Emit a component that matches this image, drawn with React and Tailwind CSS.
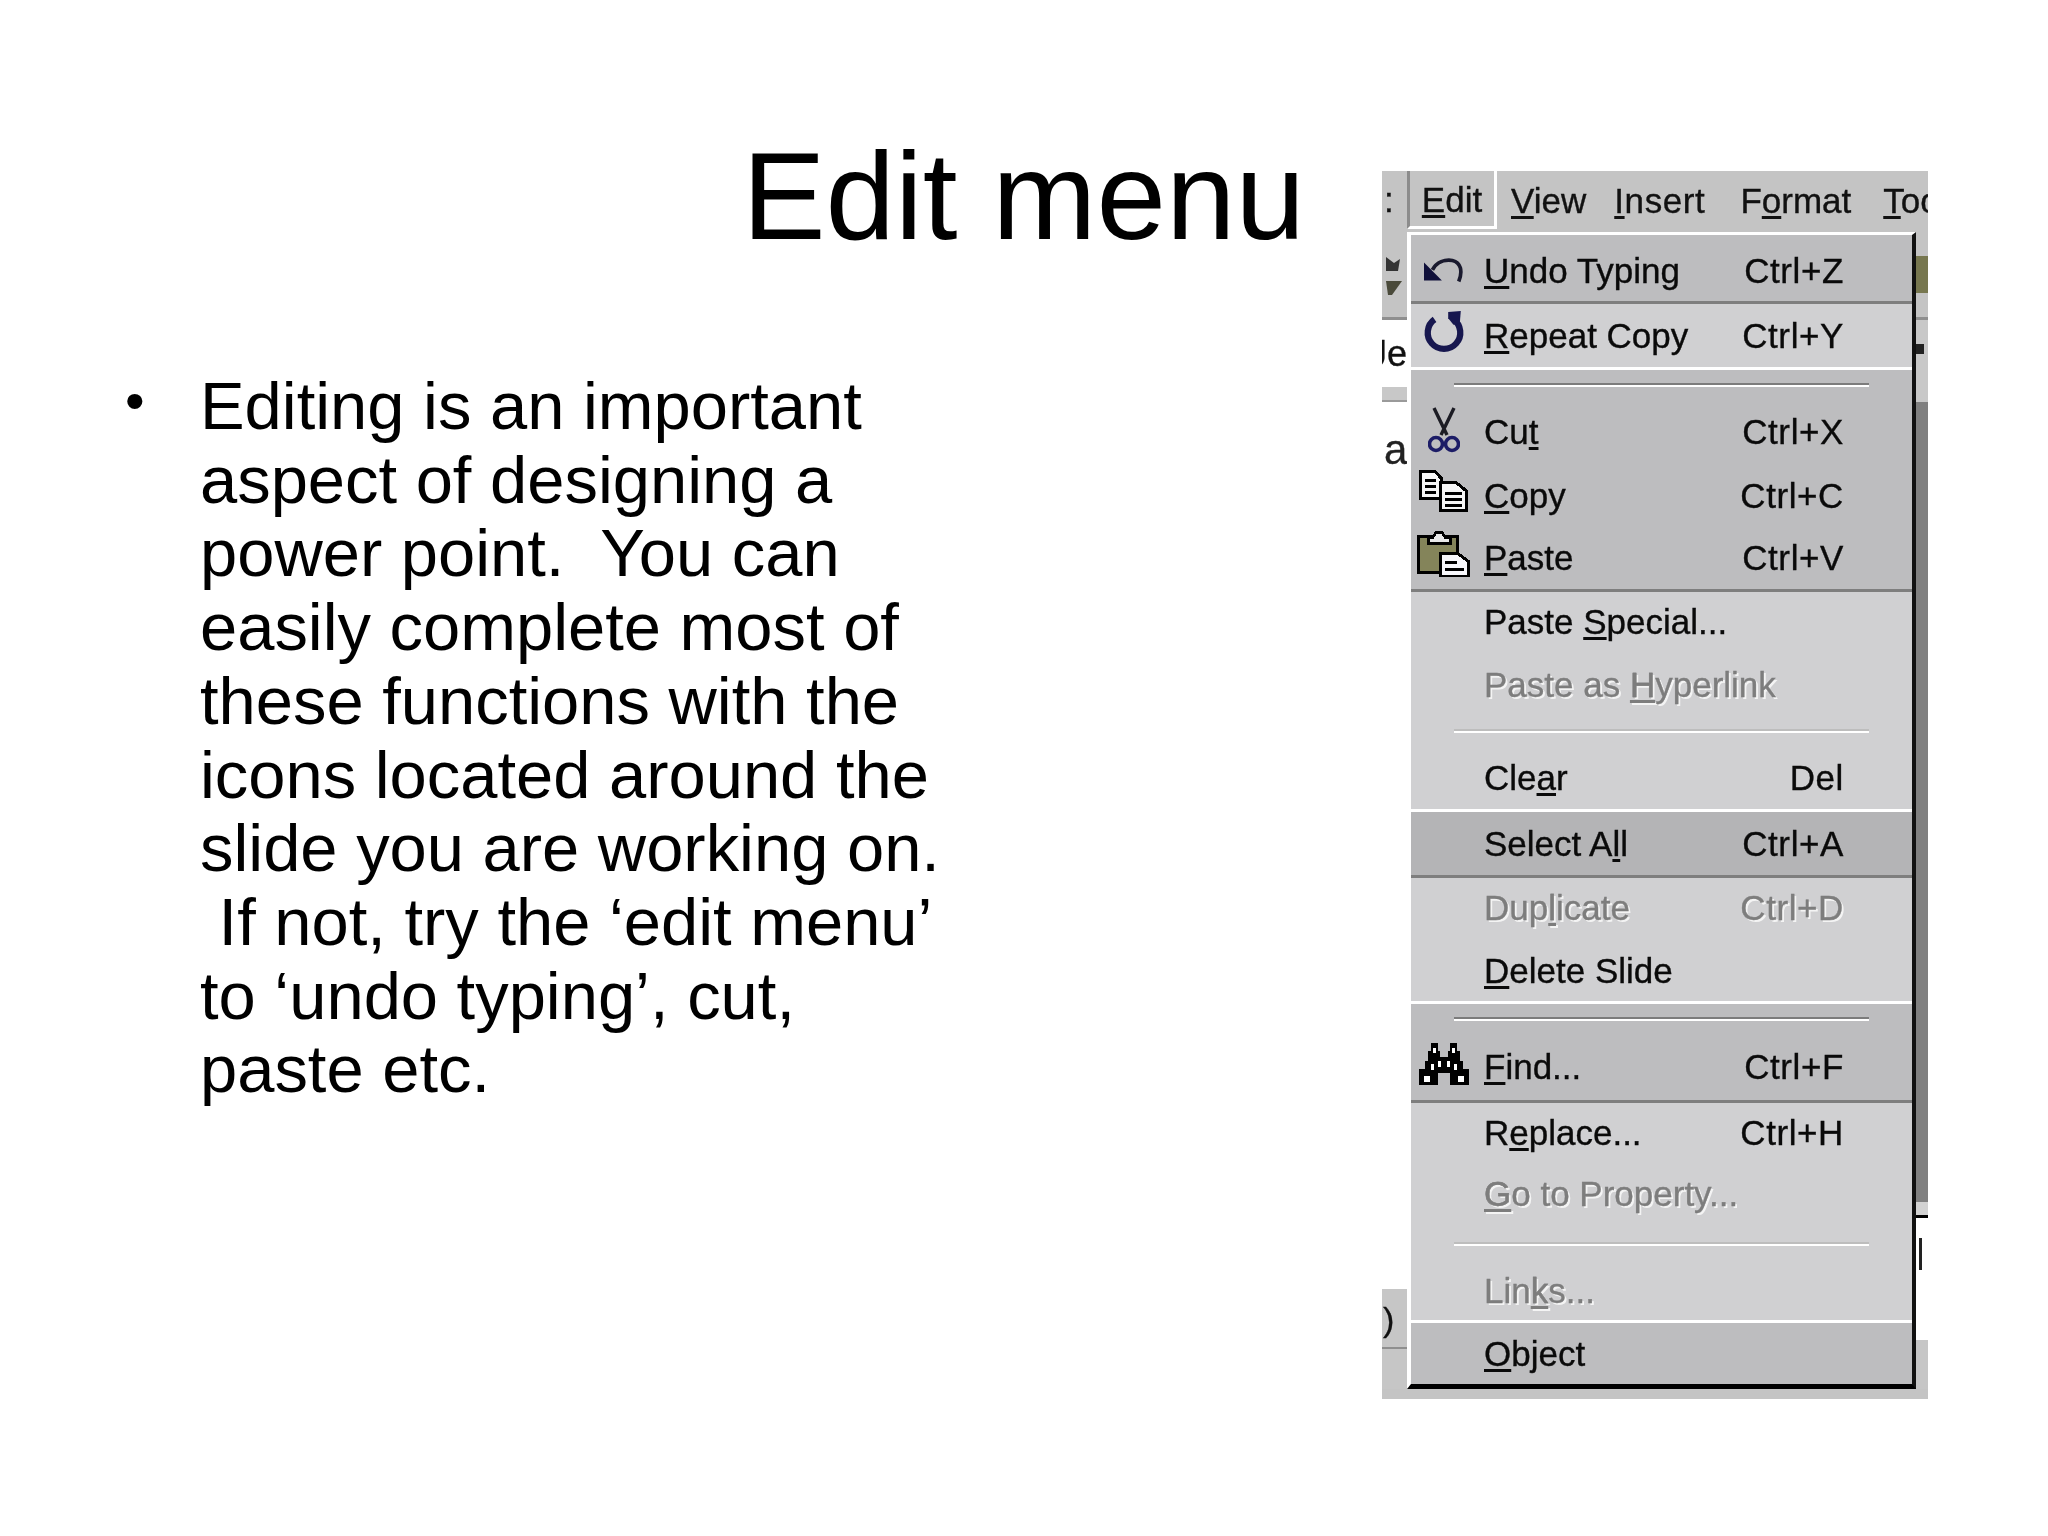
const sans = "font-['Liberation_Sans',Arial,sans-serif]";

function UndoIcon() {
  return (
    <svg width="40" height="26" viewBox="0 0 38 24" className="block">
      <path d="M0 4 L17 21 L0 21 Z" fill="#10103a" />
      <path d="M8 11 C12 3 20 1 27 2 C35 4 37 12 33 22" fill="none" stroke="#1a1a2e" strokeWidth="3.5" />
    </svg>
  );
}
function RepeatIcon() {
  return (
    <svg width="42" height="42" viewBox="0 0 40 40" className="-mt-[8px] block">
      <path d="M11 8 A15.5 15.5 0 1 0 29 8" fill="none" stroke="#17174f" strokeWidth="6" />
      <path d="M24 1 L36 0 L35 12 L29 13 L24 7 Z" fill="#17174f" />
    </svg>
  );
}
function CutIcon() {
  return (
    <svg width="32" height="48" viewBox="0 0 32 46" className="-mt-[2px] block">
      <path d="M6 0 L19 27 M26 0 L13 27" fill="none" stroke="#1c1c24" strokeWidth="3.4" />
      <circle cx="8" cy="36" r="6.5" fill="none" stroke="#1c1c66" strokeWidth="3.6" />
      <circle cx="24" cy="36" r="6.5" fill="none" stroke="#1c1c66" strokeWidth="3.6" />
    </svg>
  );
}
function CopyIcon() {
  return (
    <svg width="50" height="42" viewBox="0 0 50 42" className="-mt-[9px] block" shapeRendering="crispEdges">
      <path d="M1.5 1.5 H16 L22 8 V28 H1.5 Z" fill="#f7f7f7" stroke="#000" strokeWidth="3" />
      <path d="M6 10 H17 M6 16 H17 M6 22 H17" stroke="#000" strokeWidth="3" />
      <path d="M21.5 12.5 H37 L47.5 21 V40.5 H21.5 Z" fill="#f7f7f7" stroke="#000" strokeWidth="3" />
      <path d="M26 23 H43 M26 29 H43 M26 35 H43" stroke="#000" strokeWidth="3" />
    </svg>
  );
}
function PasteIcon() {
  return (
    <svg width="53" height="46" viewBox="0 0 53 46" className="-mt-[8px] block" shapeRendering="crispEdges">
      <rect x="1.5" y="5" width="39" height="36" fill="#84845a" stroke="#000" strokeWidth="3" />
      <path d="M11 12 V6 H16 L19 1.5 H25 L28 6 H33 V12 Z" fill="#e8e8e8" stroke="#000" strokeWidth="3" />
      <path d="M23.5 22 H40 L51 30 V45 H23.5 Z" fill="#f7f7fb" stroke="#000" strokeWidth="3" />
      <path d="M28 31 H40 M28 38 H47" stroke="#000" strokeWidth="3" />
    </svg>
  );
}
function FindIcon() {
  return (
    <svg width="50" height="42" viewBox="0 0 50 42" className="-mt-[6px] block" shapeRendering="crispEdges">
      <path d="M12 0 H19 V8 H21 V14 H29 V8 H31 V0 H38 V8 H41 V18 H44 V26 H50 V42 H31 V30 H19 V42 H0 V26 H6 V18 H9 V8 H12 Z" fill="#000" />
      <path d="M14 5 H17 V10 H14 Z M33 5 H36 V10 H33 Z M12 21 H15 V27 H12 Z M28 18 H31 V24 H28 Z M19 18 H22 V24 H19 Z M35 21 H38 V27 H35 Z M5 33 H11 V39 H5 Z M39 33 H45 V39 H39 Z" fill="#fff" />
    </svg>
  );
}

function Item({ h, icon, label, shortcut, off, nudge = "" }) {
  const tone = off ? "text-[#7d7d7d] [text-shadow:2px_2px_0_#f4f4f4]" : "text-[#0a0a0a]";
  return (
    <div className={`relative flex items-center ${h} ${nudge} pr-[68px] ${tone}`}>
      <div className="mr-[8px] flex w-[65px] shrink-0 justify-center">{icon}</div>
      <div className="whitespace-pre">{label}</div>
      <div className="ml-auto tracking-[0.6px]">{shortcut}</div>
    </div>
  );
}
const M = ({ children }) => <span className="underline decoration-[3px] underline-offset-[3px]">{children}</span>;

function Sep({ h, dark }) {
  return (
    <div className={`flex ${h} items-center pl-[43px] pr-[43px]`}>
      <div className={`w-full border-b-[2px] border-t-[2px] border-b-white ${dark ? "border-t-[#7c7c7c]" : "border-t-[#bdbdbd]"}`} />
    </div>
  );
}

function LeftStrip() {
  return (
    <div className="flex w-[25px] shrink-0 flex-col overflow-hidden">
      <div className="flex h-[88px] flex-col items-center justify-center border-b-[3px] border-[#8f8f8f] bg-[#c4c4c4]">
        <svg width="18" height="40" viewBox="0 0 18 40" className="block">
          <path d="M0 2 L8 8 L14 4 L12 16 L0 16 Z" fill="#333" />
          <path d="M0 26 H16 L6 40 H2 Z" fill="#4a4a3a" />
        </svg>
      </div>
      <div className="flex h-[67px] items-center justify-end bg-white text-[#111] text-[36px]">Je</div>
      <div className="h-[15px] border-b-[2px] border-[#9a9a9a] bg-[#c8c8c8]" />
      <div className="h-[887px] bg-white pl-[2px] pt-[24px] text-[#222] text-[42px] leading-[48px]">a</div>
      <div className="flex grow flex-col bg-[#c6c6c6]">
        <div className="h-[60px] border-b-[2px] border-[#8f8f8f] pl-[1px] pt-[10px] text-[34px] leading-[40px] text-[#111]">)</div>
      </div>
    </div>
  );
}

function RightStrip() {
  return (
    <div className="flex w-[12px] shrink-0 flex-col overflow-hidden">
      <div className="flex h-[88px] flex-col border-b-[3px] border-[#8f8f8f] bg-[#c4c4c4] pt-[24px]">
        <div className="h-[37px] w-full bg-[#77774f]" />
      </div>
      <div className="flex h-[82px] flex-col items-start bg-[#c8c8c8] pt-[24px]">
        <div className="h-[10px] w-[8px] bg-[#222]" />
      </div>
      <div className="h-[800px] bg-[#808080]" />
      <div className="h-[16px] border-b-[3px] border-black bg-[#d2d2d2]" />
      <div className="h-[122px] bg-white pl-[3px] pt-[20px]">
        <div className="h-[32px] w-[3px] bg-[#222]" />
      </div>
      <div className="grow border-t-[10px] border-[#c6c6c6] bg-[#c6c6c6]" />
    </div>
  );
}

function Menu() {
  const dark = "bg-[#bdbdbf]";
  const light = "bg-[#d0d0d2]";
  const lineD = "border-b-[3px] border-[#7e7e7e]";
  const lineL = "border-b-[3px] border-white";
  return (
    <div className="flex h-[1157px] w-[509px] shrink-0 flex-col border-b-[5px] border-l-[4px] border-r-[4px] border-t-[3px] border-b-black border-l-white border-r-[#111] border-t-white">
      <div className={`${dark} ${lineD}`}>
        <Item h="h-[66px]" nudge="pt-[5px]" icon={<UndoIcon />} label={<><M>U</M>ndo Typing</>} shortcut="Ctrl+Z" />
      </div>
      <div className={`${light} ${lineL}`}>
        <Item h="h-[63px]" icon={<RepeatIcon />} label={<><M>R</M>epeat Copy</>} shortcut="Ctrl+Y" />
      </div>
      <div className={`${dark} ${lineD}`}>
        <Sep h="h-[30px]" dark />
        <Item h="h-[64px]" icon={<CutIcon />} label={<>Cu<M>t</M></>} shortcut="Ctrl+X" />
        <Item h="h-[63px]" icon={<CopyIcon />} label={<><M>C</M>opy</>} shortcut="Ctrl+C" />
        <Item h="h-[62px]" icon={<PasteIcon />} label={<><M>P</M>aste</>} shortcut="Ctrl+V" />
      </div>
      <div className={`${light} ${lineL}`}>
        <Item h="h-[64px]" nudge="pb-[5px]" label={<>Paste <M>S</M>pecial...</>} />
        <Item h="h-[62px]" nudge="pb-[5px]" off label={<>Paste as <M>H</M>yperlink</>} />
        <Sep h="h-[26px]" />
        <Item h="h-[65px]" nudge="pt-[2px]" label={<>Cle<M>a</M>r</>} shortcut="Del" />
      </div>
      <div className={`bg-[#b4b4b6] ${lineD}`}>
        <Item h="h-[63px]" label={<>Select A<M>l</M>l</>} shortcut="Ctrl+A" />
      </div>
      <div className={`${light} ${lineL}`}>
        <Item h="h-[64px]" nudge="pb-[4px]" off label={<>Dup<M>l</M>icate</>} shortcut="Ctrl+D" />
        <Item h="h-[59px]" nudge="pb-[2px]" label={<><M>D</M>elete Slide</>} />
      </div>
      <div className={`${dark} ${lineD}`}>
        <Sep h="h-[30px]" dark />
        <Item h="h-[66px]" icon={<FindIcon />} label={<><M>F</M>ind...</>} shortcut="Ctrl+F" />
      </div>
      <div className={`${light} ${lineL}`}>
        <Item h="h-[64px]" nudge="pb-[4px]" label={<>R<M>e</M>place...</>} shortcut="Ctrl+H" />
        <Item h="h-[60px]" nudge="pb-[6px]" off label={<><M>G</M>o to Property...</>} />
        <Sep h="h-[34px]" />
        <Item h="h-[59px]" off label={<>Lin<M>k</M>s...</>} />
      </div>
      <div className={`${dark} grow`}>
        <Item h="h-[61px]" label={<><M>O</M>bject</>} />
      </div>
    </div>
  );
}

function Screenshot() {
  return (
    <div className={`${sans} flex h-[1228px] w-[546px] shrink-0 flex-col overflow-hidden bg-[#c4c4c4] text-[35px] leading-[40px] text-[#111] blur-[0.6px] [-webkit-text-stroke:0.35px]`}>
      <div className="flex h-[61px] shrink-0 items-start overflow-hidden">
        <div className="flex h-[57px] w-[25px] shrink-0 items-center pl-[2px]">:</div>
        <div className="flex h-[58px] w-[90px] shrink-0 items-center justify-center border-b-[3px] border-l-[3px] border-r-[3px] border-b-white border-l-[#8c8c8c] border-r-white pt-[2px]">
          <div><M>E</M>dit</div>
        </div>
        <div className="ml-[14px] flex h-[57px] shrink-0 items-center gap-[32px] whitespace-nowrap pt-[2px]">
          <div><M>V</M>iew</div>
          <div className="-ml-[4px] tracking-[0.6px]"><M>I</M>nsert</div>
          <div className="ml-[3px]">F<M>o</M>rmat</div>
          <div><M>T</M>ools</div>
        </div>
      </div>
      <div className="flex h-[1157px] shrink-0">
        <LeftStrip />
        <Menu />
        <RightStrip />
      </div>
    </div>
  );
}

const lines = [
  "Editing is an important",
  "aspect of designing a",
  "power point.  You can",
  "easily complete most of",
  "these functions with the",
  "icons located around the",
  "slide you are working on.",
  " If not, try the ‘edit menu’",
  "to ‘undo typing’, cut,",
  "paste etc.",
];

export default function App() {
  return (
    <div className={`${sans} flex h-[1536px] w-[2048px] overflow-hidden bg-white text-black`}>
      <div className="w-[1382px] shrink-0">
        <h1 className="pr-[77px] pt-[125px] text-right text-[125px] font-normal leading-[142px]">Edit menu</h1>
        <div className="mt-[102px] flex text-[66.9px] leading-[73.7px]">
          <div className="-mt-[5px] w-[200px] shrink-0 pl-[125px] text-[56px]">•</div>
          <div className="whitespace-pre">
            {lines.map((l) => (
              <div key={l}>{l}</div>
            ))}
          </div>
        </div>
      </div>
      <div className="pt-[171px]">
        <Screenshot />
      </div>
    </div>
  );
}
